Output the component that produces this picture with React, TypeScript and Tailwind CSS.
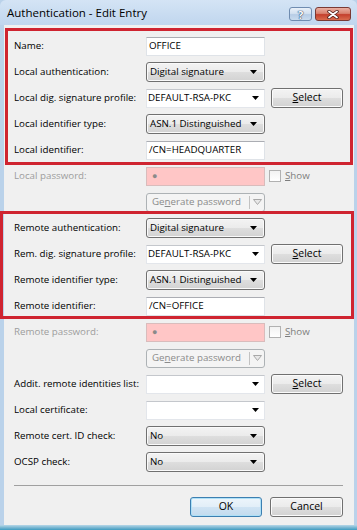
import React from "react";

type Row = {
  label: string;
  kind: "text" | "select" | "combo" | "pw" | "gen";
  value?: string;
  btn?: boolean;
};

const rows: Row[] = [
  { label: "Name:", kind: "text", value: "OFFICE" },
  { label: "Local authentication:", kind: "select", value: "Digital signature" },
  { label: "Local dig. signature profile:", kind: "combo", value: "DEFAULT-RSA-PKC", btn: true },
  { label: "Local identifier type:", kind: "select", value: "ASN.1 Distinguished" },
  { label: "Local identifier:", kind: "text", value: "/CN=HEADQUARTER" },
  { label: "Local password:", kind: "pw" },
  { label: "", kind: "gen" },
  { label: "Remote authentication:", kind: "select", value: "Digital signature" },
  { label: "Rem. dig. signature profile:", kind: "combo", value: "DEFAULT-RSA-PKC", btn: true },
  { label: "Remote identifier type:", kind: "select", value: "ASN.1 Distinguished" },
  { label: "Remote identifier:", kind: "text", value: "/CN=OFFICE" },
  { label: "Remote password:", kind: "pw" },
  { label: "", kind: "gen" },
  { label: "Addit. remote identities list:", kind: "combo", value: "", btn: true },
  { label: "Local certificate:", kind: "combo", value: "" },
  { label: "Remote cert. ID check:", kind: "select", value: "No" },
  { label: "OCSP check:", kind: "select", value: "No" },
];

function Arrow({ color = "#000" }: { color?: string }) {
  return (
    <svg width="7" height="4" viewBox="0 0 7 4" className="shrink-0">
      <polygon points="0,0 7,0 3.5,4" fill={color} />
    </svg>
  );
}

function Field({ row }: { row: Row }) {
  if (row.kind === "text") {
    return (
      <div className="h-[19px] w-[119px] bg-white border border-[#dfe3e8] border-t-[#abadb3] flex items-center pl-[2px] text-[#000] overflow-hidden whitespace-nowrap">
        {row.value}
      </div>
    );
  }
  if (row.kind === "select") {
    return (
      <div className="h-[20px] w-[119px] rounded-[3px] border border-[#707070] bg-[linear-gradient(#f3f3f3_0%,#ebebeb_50%,#dedede_51%,#d2d2d2_100%)] shadow-[inset_0_0_0_1px_#fafafa] flex items-center pl-[3px] pr-[7px] whitespace-nowrap">
        <span className="flex-1 text-[#000]">{row.value}</span>
        <Arrow />
      </div>
    );
  }
  if (row.kind === "combo") {
    return (
      <div className="h-[19px] w-[119px] bg-white border border-[#e3e6eb] border-t-[#c4c7cc] flex items-center pl-[1px] pr-[5px] whitespace-nowrap">
        <span className="flex-1 text-[#000]">{row.value}</span>
        <Arrow />
      </div>
    );
  }
  if (row.kind === "pw") {
    return (
      <div className="h-[19px] w-[119px] bg-[#ffc6c6] border border-[#d9bcbc] flex items-center pl-[5px] text-[#8a8a8a] text-[9px]">
        ●
      </div>
    );
  }
  return (
    <div className="h-[19px] w-[119px] rounded-[3px] border border-[#adb2b5] bg-[#f4f4f4] flex items-center text-[#8b8b8b] whitespace-nowrap">
      <span className="flex-1 pl-[5px]">
        Ge<span className="underline">n</span>erate password
      </span>
      <span className="h-[13px] w-px bg-[#c2c2c2]" />
      <span className="w-[14px] flex justify-center">
        <svg width="9" height="6" viewBox="0 0 9 6">
          <polygon points="0.5,0.5 8.5,0.5 4.5,5.5" fill="#e8e8e8" stroke="#a8a8a8" strokeWidth="1" />
        </svg>
      </span>
    </div>
  );
}

function WinButton({ children, def = false, w = "w-[72px]" }: { children: React.ReactNode; def?: boolean; w?: string }) {
  return (
    <div
      className={
        def
          ? `h-[20px] ${w} rounded-[3px] border border-[#3c7fb1] bg-[linear-gradient(#edf5fb_0%,#e2eef8_50%,#cfe3f3_51%,#c3dbee_100%)] shadow-[inset_0_0_0_1px_#aee0f7] flex items-center justify-center text-[#000] text-[10.5px]`
          : `h-[20px] ${w} rounded-[3px] border border-[#707070] bg-[linear-gradient(#f3f3f3_0%,#ebebeb_50%,#dedede_51%,#d2d2d2_100%)] shadow-[inset_0_0_0_1px_#fbfbfb] flex items-center justify-center text-[#000] text-[10.5px]`
      }
    >
      {children}
    </div>
  );
}

function Extra({ row }: { row: Row }) {
  if (row.btn) {
    return (
      <div className="ml-[6px]">
        <WinButton>
          <span>
            <span className="underline">S</span>elect
          </span>
        </WinButton>
      </div>
    );
  }
  if (row.kind === "pw") {
    return (
      <div className="ml-[4px] flex items-center gap-[4px] text-[#7d7d7d]">
        <span className="w-[12px] h-[12px] border border-[#b1b1b1] bg-[linear-gradient(#f2f2f2,#ffffff)]" />
        <span>
          <span className="underline">S</span>how
        </span>
      </div>
    );
  }
  return null;
}

export default function App() {
  return (
    <div className="w-[357px] h-[530px] relative overflow-hidden bg-[#bad2ea] [font-family:'Open_Sans','Noto_Sans',sans-serif] text-[9.75px] text-black flex flex-col">
      {/* title bar */}
      <div className="h-[25px] shrink-0 flex items-start bg-[linear-gradient(#d4e4f5,#c0d6ee)] rounded-tl-[6px] rounded-tr-[6px]">
        <span className="pl-[7px] pt-[5px] text-[11.5px] text-[#000] leading-[15px]">Authentication - Edit Entry</span>
        <div className="ml-auto mt-[7px] mr-[6px] flex gap-[3px]">
          <div className="w-[23px] h-[14px] rounded-[3px] border border-[#6f8cb0] bg-[linear-gradient(#e9f0f8_0%,#d3e1f0_45%,#b7cde6_55%,#c9dbee_100%)] flex items-center justify-center">
            <span className="text-white font-bold text-[11px] leading-[11px] [text-shadow:0_0_1px_#2c4a6e,0_0_1px_#2c4a6e,0_0_1px_#2c4a6e]">?</span>
          </div>
          <div className="w-[36px] h-[14px] rounded-[3px] border border-[#7a3a34] bg-[linear-gradient(#eab0a2_0%,#d9826f_45%,#c4402d_55%,#d96b4d_100%)] flex items-center justify-center">
            <svg width="12" height="9" viewBox="0 0 12 9">
              <path d="M2 1.5 L10 7.5 M10 1.5 L2 7.5" stroke="#4a1a14" strokeWidth="3.4" strokeLinecap="round" />
              <path d="M2 1.5 L10 7.5 M10 1.5 L2 7.5" stroke="#ffffff" strokeWidth="1.8" strokeLinecap="round" />
            </svg>
          </div>
        </div>
      </div>

      {/* client area */}
      <div className="ml-[4px] mr-[3px] h-[500px] shrink-0 bg-[#f0f0f0] pt-[11px] flex flex-col">
        <div className="flex flex-col gap-[6px] pl-[10px]">
          {rows.map((r, i) => (
            <div key={i} className="h-[20px] grid grid-cols-[132px_119px_auto] items-center">
              <span
                className={
                  r.kind === "pw" ? "text-[#9d9d9d] whitespace-nowrap" : "text-[#000] whitespace-nowrap"
                }
              >
                {r.label}
              </span>
              <Field row={r} />
              <Extra row={r} />
            </div>
          ))}
        </div>
        <div className="mt-[13px] ml-[10px] mr-[11px] h-px bg-[#a0a0a0]" />
        <div className="mt-[11px] flex justify-end gap-[8px] pr-[11px]">
          <WinButton def>OK</WinButton>
          <WinButton w="w-[73px]">Cancel</WinButton>
        </div>
      </div>
      <div className="flex-1 bg-[linear-gradient(#b7d7e8,#6fb2cf_60%,#3f9cc0)]" />

      {/* annotation boxes */}
      <div className="absolute left-[5px] top-[28px] w-[348px] h-[137px] border-[3px] border-[#cf2430]" />
      <div className="absolute left-0 top-[211px] w-[354px] h-[108px] border-[3px] border-[#cf2430]" />
    </div>
  );
}
